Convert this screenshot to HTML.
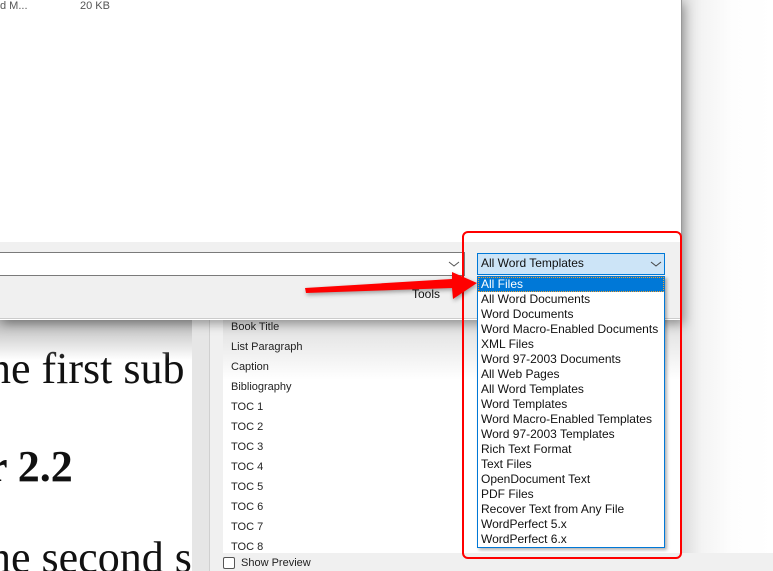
<!DOCTYPE html>
<html><head><style>
*{margin:0;padding:0;box-sizing:border-box}
body{width:773px;height:571px;overflow:hidden;position:relative;background:#fff;font-family:"Segoe UI","Liberation Sans","DejaVu Sans",sans-serif}
.abs{position:absolute}
.doc{font-family:"Liberation Serif",serif;color:#111;white-space:nowrap}
.sty{position:absolute;left:231px;font-size:11px;color:#222}
.dd div{height:15px;line-height:15px;padding-left:3px;font-size:12px;color:#111;white-space:nowrap}
</style></head><body>
<div class="abs" style="left:682px;top:0;width:91px;height:571px;background:linear-gradient(90deg,#dcdcdc 0,#f4f4f4 20px,#fdfdfd 50px,#fff 91px)"></div>
<div class="abs" style="left:0;top:320px;width:192px;height:251px;background:#fff;overflow:hidden">
  <div class="doc abs" style="left:-11px;top:23px;font-size:44px">ne first sub</div>
  <div class="doc abs" style="left:-12px;top:121px;font-size:44px;font-weight:bold">r 2.2</div>
  <div class="doc abs" style="left:-11px;top:212px;font-size:44px">ne second s</div>
</div>
<div class="abs" style="left:0;top:320px;width:682px;height:40px;background:linear-gradient(#b8b8b8,rgba(255,255,255,0))"></div>
<div class="abs" style="left:192px;top:320px;width:17px;height:251px;background:#e6e6e6"></div>
<div class="abs" style="left:209px;top:320px;width:1px;height:251px;background:#d0d0d0"></div>
<div class="abs" style="left:210px;top:320px;width:13px;height:251px;background:#f0f0f0"></div>
<div class="abs" style="left:223px;top:320px;width:459px;height:233px;background:linear-gradient(#dedede,#fff 60px)"></div>
<div class="abs" style="left:223px;top:553px;width:550px;height:18px;background:#f0f0f0"></div>
<div class="abs" style="left:223px;top:557px;width:12px;height:12px;border:1px solid #555;background:#fff;border-radius:2px"></div>
<div class="abs" style="left:241px;top:557px;font-size:11px;color:#222">Show Preview</div>
<div class="sty" style="top:321px">Book Title</div>
<div class="sty" style="top:341px">List Paragraph</div>
<div class="sty" style="top:361px">Caption</div>
<div class="sty" style="top:381px">Bibliography</div>
<div class="sty" style="top:401px">TOC 1</div>
<div class="sty" style="top:421px">TOC 2</div>
<div class="sty" style="top:441px">TOC 3</div>
<div class="sty" style="top:461px">TOC 4</div>
<div class="sty" style="top:481px">TOC 5</div>
<div class="sty" style="top:501px">TOC 6</div>
<div class="sty" style="top:521px">TOC 7</div>
<div class="sty" style="top:541px">TOC 8</div>
<div class="abs" style="left:0;top:0;width:682px;height:320px;background:#fff;border-right:1px solid #999;box-shadow:2px 4px 10px rgba(0,0,0,.35)"></div>
<div class="abs" style="left:0;top:0;font-size:11px;color:#555;line-height:12px">d M...</div>
<div class="abs" style="left:80px;top:0;font-size:11px;color:#555;line-height:12px">20 KB</div>
<div class="abs" style="left:0;top:242px;width:681px;height:77px;background:#f0f0f0;border-bottom:1px solid #ccc"></div>
<div class="abs" style="left:0;top:252px;width:465px;height:24px;background:#fff;border:1px solid #7a7a7a;border-left:none"></div>
<svg class="abs" style="left:448px;top:260px" width="12" height="8"><path d="M1 2 L6 6 L11 2" fill="none" stroke="#555"/></svg>
<div class="abs" style="left:412px;top:287px;font-size:12px;color:#111">Tools</div>
<div class="abs" style="left:477px;top:253px;width:188px;height:22px;background:#cce4f7;border:1px solid #0078d7"></div>
<div class="abs" style="left:481px;top:256px;font-size:12px;color:#111">All Word Templates</div>
<svg class="abs" style="left:650px;top:261px" width="12" height="8"><path d="M1 1 L6 5 L11 1" fill="none" stroke="#444"/></svg>
<div class="abs dd" style="left:477px;top:276px;width:188px;height:272px;background:#fff;border:1px solid #0078d7;box-shadow:2px 2px 3px rgba(0,0,0,.3)">
<div style="background:#0078d7;color:#fff;outline:1px dotted #f0a030;outline-offset:-1px">All Files</div>
<div>All Word Documents</div><div>Word Documents</div><div>Word Macro-Enabled Documents</div><div>XML Files</div><div>Word 97-2003 Documents</div><div>All Web Pages</div><div>All Word Templates</div><div>Word Templates</div><div>Word Macro-Enabled Templates</div><div>Word 97-2003 Templates</div><div>Rich Text Format</div><div>Text Files</div><div>OpenDocument Text</div><div>PDF Files</div><div>Recover Text from Any File</div><div>WordPerfect 5.x</div><div>WordPerfect 6.x</div>
</div>
<div class="abs" style="left:462px;top:231px;width:220px;height:328px;border:2px solid #f00;border-radius:6px"></div>
<svg class="abs" style="left:0;top:0" width="773" height="571"><polygon points="305,288 306,293 452,288 453,299 477,283 452,272 452,279" fill="#f00" style="filter:drop-shadow(1px 2px 2px rgba(0,0,0,.35))"/></svg>
</body></html>
